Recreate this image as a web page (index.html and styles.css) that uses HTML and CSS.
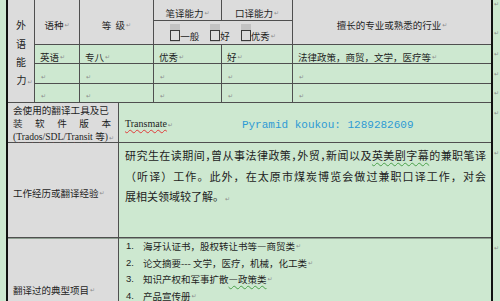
FILE: index.html
```html
<!DOCTYPE html>
<html lang="zh-CN">
<head>
<meta charset="utf-8">
<title>翻译能力表</title>
<link rel="stylesheet" href="styles.css">
</head>
<body>
<div class="page">
  <div class="form">
    <div class="cell gray wai"><span>外</span><span>语</span><span>能</span><span>力<i class="pm pm-r">↵</i></span></div>
    <div class="cell gray hd span-r2">语种<i class="pm">↵</i></div>
    <div class="cell gray hd span-r2 span-c2">等&nbsp;&nbsp;级<i class="pm">↵</i></div>
    <div class="cell gray hd1">笔译能力<i class="pm">↵</i></div>
    <div class="cell gray hd1">口译能力<i class="pm">↵</i></div>
    <div class="cell gray hd span-r2">擅长的专业或熟悉的行业<i class="pm">↵</i></div>
    <div class="cell gray chk span-c2">
      <span class="opt"><span class="box"></span>一般</span>
      <span class="opt"><span class="box"></span>好</span>
      <span class="opt"><span class="box"></span>优秀<i class="pm">↵</i></span>
    </div>

    <div class="cell dat">英语<i class="pm">↵</i></div>
    <div class="cell dat span-c2"><span class="gr">专八</span><i class="pm">↵</i></div>
    <div class="cell dat">优秀<i class="pm">↵</i></div>
    <div class="cell dat">好<i class="pm">↵</i></div>
    <div class="cell dat">法律政策，商贸，文学，医疗等<i class="pm">↵</i></div>

    <div class="cell dat"><i class="pm">↵</i></div>
    <div class="cell dat span-c2"><i class="pm">↵</i></div>
    <div class="cell dat"><i class="pm">↵</i></div>
    <div class="cell dat"><i class="pm">↵</i></div>
    <div class="cell dat"><i class="pm">↵</i></div>

    <div class="cell dat"><i class="pm">↵</i></div>
    <div class="cell dat span-c2"><i class="pm">↵</i></div>
    <div class="cell dat"><i class="pm">↵</i></div>
    <div class="cell dat"><i class="pm">↵</i></div>
    <div class="cell dat"><i class="pm">↵</i></div>

    <div class="cell gray lab6 span-c3">
      <div class="ln">会使用的翻译工具及已</div>
      <div class="ln just">装软件版本</div>
      <div class="ln latin"><span class="sp">(Trados/SDL/Transit</span> 等)<i class="pm">↵</i></div>
    </div>
    <div class="cell tools span-c4">
      <span class="latin tm"><span class="sp">Transmate</span><i class="pm">↵</i></span>
      <span class="qq">Pyramid koukou: 1289282609</span>
    </div>

    <div class="cell gray lab7 span-c3">工作经历或翻译经验<i class="pm">↵</i></div>
    <div class="cell para span-c4">
      <div class="pl just halt">研究生在读期间，曾从事法律政策，外贸，新闻以及<span class="gr">英美剧字幕</span>的兼职笔译</div>
      <div class="pl just">（听译）工作。此外，在太原市煤炭博览会做过兼职口译工作，对会</div>
      <div class="pl">展相关领域较了解。<i class="pm">↵</i></div>
    </div>

    <div class="cell gray lab8 span-c3 r8">翻译过的典型项目<i class="pm">↵</i></div>
    <div class="cell list span-c4 r8">
      <div class="li"><span class="num">1.</span>海牙认证书，股权转让书等—商贸类<i class="pm">↵</i></div>
      <div class="li"><span class="num">2.</span>论文摘要--- 文学，医疗，机械，化工类<i class="pm">↵</i></div>
      <div class="li"><span class="num">3.</span>知识产权和军事扩散<span class="gr">—政策类</span><i class="pm">↵</i></div>
      <div class="li"><span class="num">4.</span>产品宣传册<i class="pm">↵</i></div>
    </div>
  </div>

  <div class="side">
    <span class="sm sm-t0">↵</span>
    <span class="sm">↵</span>
    <span class="sm">↵</span>
    <span class="sm">↵</span>
    <span class="sm">↵</span>
    <span class="sm sm-t">↵</span>
    <span class="sm sm-t">↵</span>
    <span class="sm sm-t">↵</span>
  </div>
</div>
</body>
</html>
```

FILE: styles.css
```css
* { box-sizing: border-box; }
html, body {
  margin: 0;
  height: 301px;
  overflow: hidden;
  background: #cde8d0;
}
body {
  font-family: "Noto Sans CJK SC", "Noto Sans", sans-serif;
  font-size: 9.5px;
  color: #1e1e1e;
}
.page {
  display: flex;
  align-items: flex-start;
  padding-left: 6px;
}
.form {
  display: grid;
  grid-template-columns: 26px 44px 38px 34px 67px 70px 198px;
  grid-template-rows: 20px 23px 18px 19px 18px 39px 94px 80px;
  gap: 1px;
  background: #4f4f4f;
  border-left: 2px solid #111;
  border-right: 2px solid #111;
}
.cell {
  background: #cde8d0;
  display: flex;
  padding: 0 5px;
  line-height: 12px;
  white-space: nowrap;
}
.gray { background: #dcdcdc; }
.span-r2 { grid-row: span 2; }
.span-c2 { grid-column: span 2; }
.span-c3 { grid-column: span 3; }
.span-c4 { grid-column: span 4; }

.pm {
  font-style: normal;
  font-family: "DejaVu Sans", sans-serif;
  font-size: 6px;
  color: #8c8c8c;
  margin-left: 1px;
}
.pm-r { margin-right: -7px; }

.wai {
  grid-row: span 5;
  flex-direction: column;
  align-items: center;
  justify-content: center;
  padding: 6px 0 0;
  line-height: 18.4px;
  font-size: 10px;
}
.hd {
  justify-content: center;
  align-items: center;
  padding-top: 5px;
}
.hd1 {
  justify-content: center;
  align-items: flex-end;
  padding-bottom: 1px;
}
.chk {
  justify-content: center;
  align-items: flex-end;
  padding-bottom: 2px;
  gap: 11px;
}
.opt {
  display: flex;
  align-items: flex-end;
}
.box {
  width: 10px;
  height: 18px;
  background: #c3c3c3;
  display: flex;
  align-items: flex-end;
  justify-content: center;
  padding-bottom: 1px;
}
.box::after {
  content: "";
  width: 8px;
  height: 9px;
  border: 1px solid #3a3a3a;
  background: #dcdcdc;
}
.dat {
  align-items: flex-end;
  padding-bottom: 0;
}

.lab6 {
  flex-direction: column;
  padding: 1px 7px 0 5px;
  line-height: 13px;
  font-size: 9.6px;
}
.just {
  text-align: justify;
  text-align-last: justify;
}
.latin {
  font-family: "Liberation Serif", "Noto Sans CJK SC", serif;
}
.sp {
  text-decoration: underline wavy #e03a3a;
  text-decoration-thickness: 1px;
  text-underline-offset: 2px;
}
.gr {
  text-decoration: underline wavy #4aa04a;
  text-decoration-thickness: 1px;
  text-underline-offset: 2px;
}
.tools {
  align-items: center;
  padding: 4px 5px 0 6px;
}
.tm { font-size: 10px; }
.qq {
  font-family: "Liberation Mono", "DejaVu Sans Mono", monospace;
  font-size: 11px;
  color: #2e9ad4;
  margin-left: 69px;
}

.lab7 {
  align-items: flex-start;
  padding-top: 44px;
}
.para {
  display: block;
  padding: 2px 5px 0 6px;
  font-size: 11px;
  line-height: 20.5px;
  color: #222;
}
.halt { font-feature-settings: "halt" 1; }

.r8 { box-shadow: inset 0 1px 0 #8fa091; }
.lab8 {
  align-items: flex-start;
  padding-top: 46px;
}
.list {
  display: block;
  padding: 0 5px 0 7px;
  line-height: 16.5px;
}
.li { display: flex; }
.num {
  width: 17px;
  font-family: "Liberation Sans", sans-serif;
}

.side {
  display: grid;
  grid-template-rows: 20px 23px 18px 19px 18px 39px 94px 80px;
  gap: 1px;
  width: 7px;
  margin-left: 1px;
}
.sm {
  display: flex;
  align-items: center;
  font-family: "DejaVu Sans", sans-serif;
  font-size: 6px;
  line-height: 8px;
  color: #8c8c8c;
}
.sm-t0 { align-items: flex-start; }
.sm-t { align-items: flex-start; padding-top: 6px; }
```
